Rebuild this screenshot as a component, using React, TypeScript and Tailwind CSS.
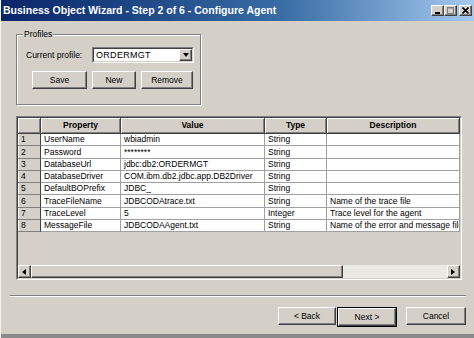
import React from 'react';

const raised =
  'bg-[#d4d0c8] border border-t-white border-l-white border-r-[#404040] border-b-[#404040] shadow-[inset_-1px_-1px_0_#808080]';

const rows = [
  ['1', 'UserName', 'wbiadmin', 'String', ''],
  ['2', 'Password', '********', 'String', ''],
  ['3', 'DatabaseUrl', 'jdbc:db2:ORDERMGT', 'String', ''],
  ['4', 'DatabaseDriver', 'COM.ibm.db2.jdbc.app.DB2Driver', 'String', ''],
  ['5', 'DefaultBOPrefix', 'JDBC_', 'String', ''],
  ['6', 'TraceFileName', 'JDBCODAtrace.txt', 'String', 'Name of the trace file'],
  ['7', 'TraceLevel', '5', 'Integer', 'Trace level for the agent'],
  ['8', 'MessageFile', 'JDBCODAAgent.txt', 'String', 'Name of the error and message file'],
];

const cols = ['w-[80px]', 'w-[144px]', 'w-[62px]', 'flex-1'];

const Button: React.FC<{ label: string; className?: string }> = ({ label, className = '' }) => (
  <div className={`${raised} h-[18px] flex items-center justify-center ${className}`}>{label}</div>
);

const Arrow: React.FC<{ dir: 'left' | 'right' | 'down' }> = ({ dir }) => {
  const pts = dir === 'left' ? '5,1 1,4 5,7' : dir === 'right' ? '1,1 5,4 1,7' : '1,2 7,2 4,6';
  return (
    <svg width="8" height="8" viewBox="0 0 8 8">
      <polygon points={pts} fill="#000" />
    </svg>
  );
};

const TitleButton: React.FC<{ children: React.ReactNode; className?: string }> = ({ children, className = '' }) => (
  <div className={`${raised} w-[13px] h-[11px] flex items-center justify-center ${className}`}>{children}</div>
);

export default function App() {
  return (
    <div className="w-[474px] h-[338px] overflow-hidden bg-[#d4d0c8] flex flex-col border-l border-l-[#f4f3ef] font-['Liberation_Sans',Arial,sans-serif] text-[8.5px] text-black leading-none">
      {/* title bar */}
      <div className="h-[21px] shrink-0 flex items-center justify-between pl-[2px] pr-[2px] bg-linear-to-r from-[#0a246a] via-[#3a6ea5] via-60% to-[#a6caf0]">
        <span className="text-white font-bold text-[10.5px]">Business Object Wizard - Step 2 of 6 - Configure Agent</span>
        <div className="flex items-center">
          <TitleButton>
            <svg width="7" height="7" viewBox="0 0 7 7"><rect x="1" y="5" width="5" height="2" fill="#000" /></svg>
          </TitleButton>
          <TitleButton>
            <svg width="7" height="7" viewBox="0 0 7 7"><rect x="0.5" y="0.5" width="6" height="6" fill="none" stroke="#808080" /><rect x="0" y="0" width="7" height="1.5" fill="#808080" /></svg>
          </TitleButton>
          <TitleButton className="ml-[2px]">
            <svg width="7" height="7" viewBox="0 0 7 7"><path d="M0.5 0.5 L6.5 6.5 M6.5 0.5 L0.5 6.5" stroke="#000" strokeWidth="1.6" /></svg>
          </TitleButton>
        </div>
      </div>

      <div className="flex-1 flex flex-col pl-[15px]">
        {/* profiles group */}
        <div className="relative mt-[13px] w-[185px] h-[71px] border border-[#808080] shadow-[inset_1px_1px_0_#fff,1px_1px_0_#fff]">
          <span className="absolute -top-[5px] left-[6px] px-[1px] bg-[#d4d0c8]">Profiles</span>
          <div className="flex items-center mt-[12px] ml-[9px]">
            <span className="w-[66px]">Current profile:</span>
            <div className="w-[102px] h-[16px] border border-t-[#808080] border-l-[#808080] border-b-white border-r-white">
              <div className="h-full flex items-center border border-t-[#404040] border-l-[#404040] border-b-[#d4d0c8] border-r-[#d4d0c8] bg-white">
                <span className="flex-1 pl-[2px] text-[9px] tracking-[0.3px]">ORDERMGT</span>
                <div className={`${raised} w-[13px] h-full flex items-center justify-center`}>
                  <Arrow dir="down" />
                </div>
              </div>
            </div>
          </div>
          <div className="flex mt-[8px] ml-[15px] gap-[5px]">
            <Button label="Save" className="w-[55px]" />
            <Button label="New" className="w-[44px]" />
            <Button label="Remove" className="w-[52px]" />
          </div>
        </div>

        {/* property table */}
        <div className="mt-[11px] w-[446px] h-[164px] border border-t-[#808080] border-l-[#808080] border-b-white border-r-white">
          <div className="h-full flex flex-col border border-t-[#404040] border-l-[#404040] border-b-[#d4d0c8] border-r-[#d4d0c8] overflow-hidden">
            <div className="flex h-[16px] shrink-0 font-bold">
              <div className="w-[23px] border-r border-b border-[#404040] shadow-[inset_1px_1px_0_#fff,inset_-1px_-1px_0_#808080]" />
              {['Property', 'Value', 'Type', 'Description'].map((h, i) => (
                <div
                  key={h}
                  className={`${cols[i]} flex items-center justify-center border-r border-b border-[#404040] shadow-[inset_1px_1px_0_#fff,inset_-1px_-1px_0_#808080]`}
                >
                  {h}
                </div>
              ))}
            </div>
            {rows.map((r) => (
              <div key={r[0]} className="flex h-[12.25px] shrink-0">
                <div className="w-[23px] pl-[3px] flex items-center border-r border-b border-r-[#404040] border-b-[#808080] shadow-[inset_1px_0_0_#fff]">
                  {r[0]}
                </div>
                {r.slice(1).map((c, i) => (
                  <div
                    key={i}
                    className={`${cols[i]} pl-[3px] flex items-center whitespace-nowrap overflow-hidden bg-white border-r border-b border-[#a0a0a0]`}
                  >
                    {c}
                  </div>
                ))}
              </div>
            ))}
            {/* horizontal scrollbar */}
            <div className="mt-auto h-[13px] flex shrink-0">
              <div className={`${raised} w-[13px] flex items-center justify-center`}>
                <Arrow dir="left" />
              </div>
              <div className={`${raised} w-[312px]`} />
              <div className="flex-1 bg-[#ebe9e4]" />
              <div className={`${raised} w-[13px] flex items-center justify-center`}>
                <Arrow dir="right" />
              </div>
            </div>
          </div>
        </div>

        {/* separator */}
        <div className="mt-[15px] -ml-[6px] w-[456px] border-t border-t-[#808080] border-b border-b-white" />

        {/* wizard buttons */}
        <div className="flex mt-[10px] ml-[262px]">
          <Button label="< Back" className="w-[58px]" />
          <div className="border border-black ml-[1px]">
            <Button label="Next >" className="w-[58px] h-[16px]" />
          </div>
          <Button label="Cancel" className="w-[60px] ml-[9px]" />
        </div>
      </div>

      <div className="h-[4px] shrink-0 bg-[#8a8a8a]" />
    </div>
  );
}
